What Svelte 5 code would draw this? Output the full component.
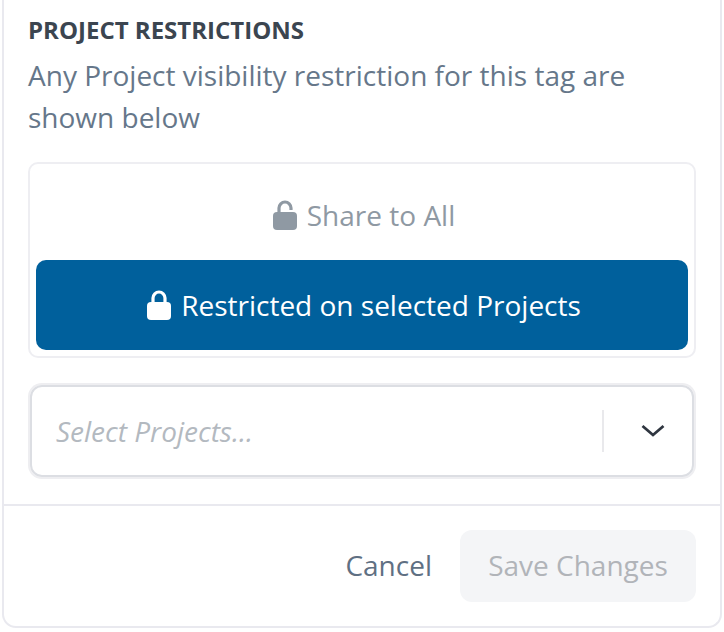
<script>
  let title = 'PROJECT RESTRICTIONS';
  let note = 'Any Project visibility restriction for this tag are shown below';
</script>

<div class="card">
  <div class="body">
    <h3>{title}</h3>
    <p>{note}</p>

    <div class="options">
      <button class="option">
        <svg class="lock" viewBox="0 0 24 30" width="24" height="30">
          <path d="M0 16a4 4 0 0 1 4-4h16a4 4 0 0 1 4 4v10a4 4 0 0 1-4 4H4a4 4 0 0 1-4-4z" fill="currentColor" />
          <path d="M6 13V8a6 6 0 0 1 12 0v2" fill="none" stroke="currentColor" stroke-width="3.2" />
        </svg>
        Share to All
      </button>
      <button class="option active">
        <svg class="lock" viewBox="0 0 24 30" width="24" height="30">
          <path d="M0 16a4 4 0 0 1 4-4h16a4 4 0 0 1 4 4v10a4 4 0 0 1-4 4H4a4 4 0 0 1-4-4z" fill="currentColor" />
          <path d="M6 13V8a6 6 0 0 1 12 0v5" fill="none" stroke="currentColor" stroke-width="3.2" />
        </svg>
        Restricted on selected Projects
      </button>
    </div>

    <div class="select">
      <span class="placeholder">Select Projects...</span>
      <span class="sep"></span>
      <span class="arrow">
        <svg viewBox="0 0 24 14" width="24" height="14">
          <path d="M1.500 2l10.500 9 10.500-9" fill="none" stroke="#2f3640" stroke-width="2.800" />
        </svg>
      </span>
    </div>
  </div>

  <div class="footer">
    <button class="cancel">Cancel</button>
    <button class="save" disabled>Save Changes</button>
  </div>
</div>

<style>
  :global(body) {
    background: #fff;
    font-family: "Open Sans", sans-serif;
  }

  .card {
    box-sizing: border-box;
    width: 720px;
    height: 628px;
    margin-left: 2px;
    border: 2px solid #e9e9ef;
    border-top: none;
    border-radius: 0 0 14px 14px;
    display: flex;
    flex-direction: column;
  }

  .body {
    height: 506px;
    flex: none;
    box-sizing: border-box;
    padding: 15px 24px 0 24px;
    border-bottom: 2px solid #e9e9ef;
  }

  h3 {
    margin: 0;
    font-size: 24px;
    line-height: 30px;
    font-weight: 700;
    color: #3b4550;
  }

  p {
    margin: 9px 0 0;
    font-size: 28px;
    line-height: 42px;
    color: #66778a;
  }

  .options {
    box-sizing: border-box;
    margin-top: 24px;
    height: 196px;
    border: 2px solid #eeeef2;
    border-radius: 10px;
    padding: 6px;
  }

  button {
    font-family: inherit;
    border: none;
    background: none;
    cursor: pointer;
  }

  .option {
    width: 100%;
    height: 90px;
    display: flex;
    align-items: center;
    justify-content: center;
    gap: 10px;
    padding: 0 0 0 4px;
    font-size: 28px;
    color: #8f99a3;
    border-radius: 10px;
  }

  .active {
    background: #00609c;
    color: #fff;
  }

  .select {
    box-sizing: border-box;
    margin: 27px 0 0 2px;
    height: 92px;
    width: 664px;
    border: 2px solid #dcdee3;
    border-radius: 12px;
    box-shadow: 0 0 0 2px #eeeef1;
    display: flex;
    align-items: center;
    padding-left: 24px;
  }

  .placeholder {
    flex: 1;
    font-size: 28px;
    font-style: italic;
    color: #b3b9c0;
  }

  .sep {
    width: 2px;
    height: 42px;
    background: #e9e9ec;
  }

  .arrow {
    box-sizing: border-box;
    width: 88px;
    padding: 0 0 0 10px;
    display: flex;
    justify-content: center;
  }

  .footer {
    flex: 1;
    display: flex;
    align-items: center;
    justify-content: flex-end;
    gap: 28px;
    padding-right: 24px;
  }

  .cancel {
    font-size: 28px;
    color: #5f7083;
    padding: 0 0 2px;
  }

  .save {
    width: 236px;
    height: 72px;
    border-radius: 12px;
    background: #f4f5f7;
    color: #b1b4b9;
    font-size: 28px;
    padding: 0 0 2px;
    cursor: default;
  }
</style>
